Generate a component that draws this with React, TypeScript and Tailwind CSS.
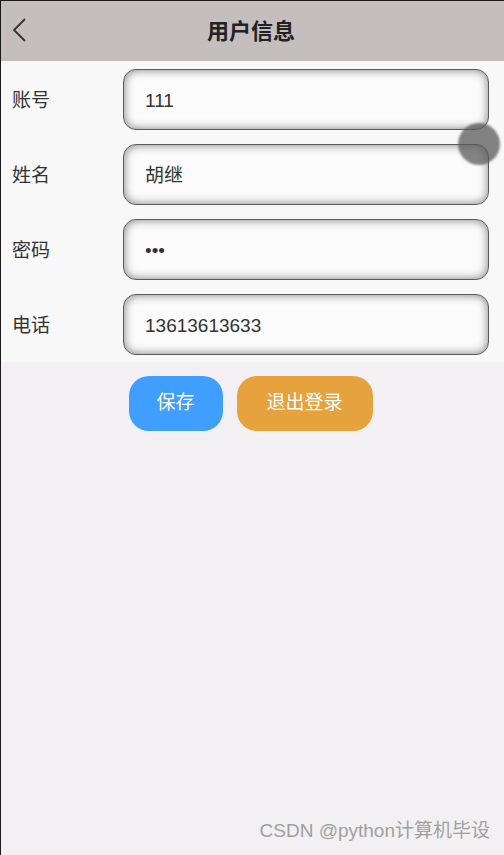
import React from "react";

const font = { fontFamily: '"Liberation Sans", "Noto Sans CJK SC", sans-serif' };

function Row({ label, value }: { label: string; value: string }) {
  return (
    <div className="flex items-center h-[75px]">
      <div className="w-[122px] pl-[11px] pt-[4px] text-[19px] text-[#333]">{label}</div>
      <div className="w-[366px] h-[61px] rounded-[13px] border-[1.5px] border-[#5a5a5a] bg-[#fbfbfb] shadow-[inset_0_0_10px_rgba(0,0,0,0.5)] flex items-center pl-[21px] pt-[3px] text-[19px] text-[#333]">
        {value}
      </div>
    </div>
  );
}

export default function App() {
  return (
    <div style={font} className="relative w-[504px] h-[855px] bg-[#f2f0f2] border-l border-t border-[#1a1a1a] overflow-hidden">
      <div className="relative h-[60px] bg-[#c4bebe] flex items-center justify-center">
        <svg className="absolute left-[10px] top-[16px]" width="17" height="26" viewBox="0 0 17 26">
          <path d="M14 2 L3 13 L14 24" fill="none" stroke="#333" strokeWidth="1.8" />
        </svg>
        <div className="text-[22px] font-bold text-[#222] ml-[-3px]">用户信息</div>
      </div>
      <div className="bg-[#f8f8f8] pt-[1px]">
        <Row label="账号" value="111" />
        <Row label="姓名" value="胡继" />
        <Row label="密码" value="•••" />
        <Row label="电话" value="13613613633" />
      </div>
      <div className="flex justify-center gap-[14px] pt-[14px] pr-[4px]">
        <button className="w-[94px] h-[55px] rounded-[20px] bg-[#409eff] text-white text-[19px]">保存</button>
        <button className="w-[136px] h-[55px] rounded-[20px] bg-[#e6a23c] text-white text-[19px]">退出登录</button>
      </div>
      <div className="absolute right-[14px] bottom-[10px] text-[19px] text-[#a0a0a0]">CSDN @python计算机毕设</div>
      <div className="absolute left-[457px] top-[122px] w-[42px] h-[42px] rounded-full bg-[rgba(90,90,90,0.75)] blur-[1px]" />
    </div>
  );
}
